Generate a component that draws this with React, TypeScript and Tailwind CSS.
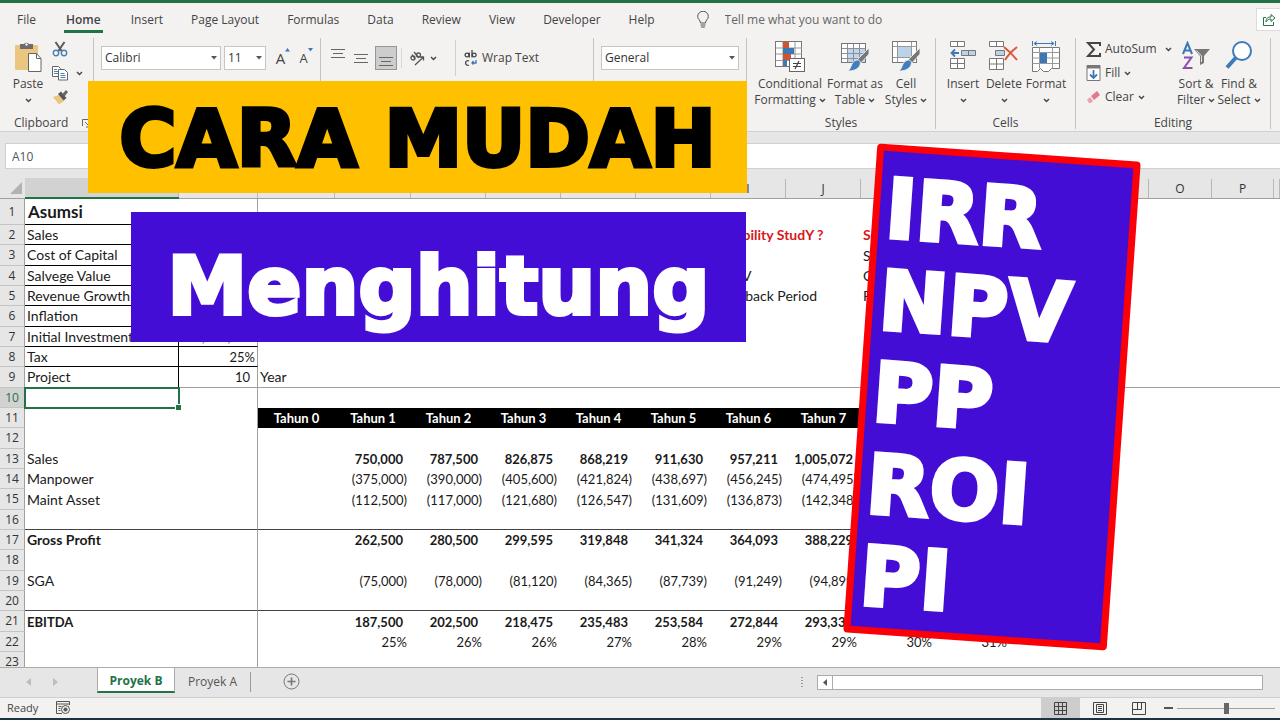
import type { ReactNode } from "react";

type Cell = {
  text: string;
  className?: string;
};

type SheetRow = {
  id: number;
  cells: Record<string, Cell>;
};

const menuTabs = ["File", "Home", "Insert", "Page Layout", "Formulas", "Data", "Review", "View", "Developer", "Help"];

const columns = [
  { name: "A", width: "w-[154px]" },
  { name: "B", width: "w-[79px]" },
  { name: "C", width: "w-[77px]" },
  { name: "D", width: "w-[76px]" },
  { name: "E", width: "w-[75px]" },
  { name: "F", width: "w-[75px]" },
  { name: "G", width: "w-[75px]" },
  { name: "H", width: "w-[75px]" },
  { name: "I", width: "w-[75px]" },
  { name: "J", width: "w-[75px]" },
  { name: "K", width: "w-[75px]" },
  { name: "L", width: "w-[75px]" },
  { name: "M", width: "w-[75px]" },
  { name: "N", width: "w-[63px]" },
  { name: "O", width: "w-[63px]" },
  { name: "P", width: "w-[62px]" },
  { name: "", width: "" },
];

const bold = "text-right font-bold pr-2";
const plain = "text-right pr-1";
const heading = "text-center font-bold text-white";

// Spreads a list of values over the columns from "first" onwards
const series = (first: string, values: string[], className: string) => {
  const start = columns.findIndex((column) => column.name === first);
  const cells: Record<string, Cell> = {};
  values.forEach((text, i) => {
    cells[columns[start + i].name] = { text, className };
  });
  return cells;
};

const label = (text: string, className = "pl-[2px] text-[14px]") => ({ A: { text, className } });

const rows: SheetRow[] = [
  { id: 1, cells: label("Asumsi", "pl-[3px] text-[17px] font-bold") },
  {
    id: 2,
    cells: {
      ...label("Sales"),
      I: { text: "Feasibility StudY ?", className: "text-[14px] font-bold text-[#d8171b]" },
      K: { text: "S", className: "pl-[2px] text-[14px] font-bold text-[#d8171b]" },
    },
  },
  { id: 3, cells: { ...label("Cost of Capital"), K: { text: "S", className: "pl-[2px] text-[14px]" } } },
  {
    id: 4,
    cells: {
      ...label("Salvege Value"),
      I: { text: "NPV", className: "pl-3 text-[14px]" },
      K: { text: "C", className: "pl-[2px] text-[14px]" },
    },
  },
  {
    id: 5,
    cells: {
      ...label("Revenue Growth"),
      I: { text: "Payback Period", className: "pl-3 text-[14px]" },
      K: { text: "R", className: "pl-[2px] text-[14px]" },
    },
  },
  { id: 6, cells: label("Inflation") },
  { id: 7, cells: { ...label("Initial Investment"), B: { text: "1,000,000", className: plain } } },
  { id: 8, cells: { ...label("Tax"), B: { text: "25%", className: "text-right pr-[2px]" } } },
  {
    id: 9,
    cells: {
      ...label("Project"),
      B: { text: "10", className: "text-right pr-[7px]" },
      C: { text: "Year", className: "pl-[2px] text-[14px]" },
    },
  },
  { id: 10, cells: {} },
  {
    id: 11,
    cells: series("C", ["Tahun 0", "Tahun 1", "Tahun 2", "Tahun 3", "Tahun 4", "Tahun 5", "Tahun 6", "Tahun 7"], heading),
  },
  { id: 12, cells: {} },
  {
    id: 13,
    cells: {
      ...label("Sales"),
      ...series("D", ["750,000", "787,500", "826,875", "868,219", "911,630", "957,211", "1,005,072"], bold),
    },
  },
  {
    id: 14,
    cells: {
      ...label("Manpower"),
      ...series("D", ["(375,000)", "(390,000)", "(405,600)", "(421,824)", "(438,697)", "(456,245)", "(474,495)"], plain),
    },
  },
  {
    id: 15,
    cells: {
      ...label("Maint Asset"),
      ...series("D", ["(112,500)", "(117,000)", "(121,680)", "(126,547)", "(131,609)", "(136,873)", "(142,348)"], plain),
    },
  },
  { id: 16, cells: {} },
  {
    id: 17,
    cells: {
      ...label("Gross Profit", "pl-[2px] text-[14px] font-bold"),
      ...series("D", ["262,500", "280,500", "299,595", "319,848", "341,324", "364,093", "388,229"], bold),
    },
  },
  { id: 18, cells: {} },
  {
    id: 19,
    cells: {
      ...label("SGA"),
      ...series("D", ["(75,000)", "(78,000)", "(81,120)", "(84,365)", "(87,739)", "(91,249)", "(94,899)"], plain),
    },
  },
  { id: 20, cells: {} },
  {
    id: 21,
    cells: {
      ...label("EBITDA", "pl-[2px] text-[13px] font-bold"),
      ...series("D", ["187,500", "202,500", "218,475", "235,483", "253,584", "272,844", "293,330"], bold),
    },
  },
  { id: 22, cells: series("D", ["25%", "26%", "26%", "27%", "28%", "29%", "29%", "30%", "31%"], plain) },
  { id: 23, cells: {} },
];

function Chevron() {
  return (
    <svg width="7" height="5" viewBox="0 0 7 5" className="shrink-0" fill="none" stroke="#444" strokeWidth="1.4">
      <path d="M1 1l2.5 2.5L6 1" />
    </svg>
  );
}

function Group({ name, className, children }: { name: string; className: string; children: ReactNode }) {
  return (
    <div className={`flex shrink-0 flex-col border-r border-[#c4c4c4] ${className}`} role="group" aria-label={name}>
      {children}
    </div>
  );
}

function GroupLabel({ children }: { children: ReactNode }) {
  return <div className="h-3 text-center leading-3">{children}</div>;
}

function BigButton({ icon, first, second, className }: { icon: ReactNode; first: string; second?: string; className: string }) {
  return (
    <button type="button" className={`flex shrink-0 flex-col items-center pt-[3px] leading-4 ${className}`}>
      <span className="flex h-[35px] items-start justify-center">{icon}</span>
      <span className="whitespace-nowrap">{first}</span>
      <span className="flex h-4 items-center gap-[3px] whitespace-nowrap">
        {second}
        <Chevron />
      </span>
    </button>
  );
}

function PasteIcon() {
  return (
    <svg width="28" height="32" viewBox="0 0 28 32">
      <rect x="1" y="4" width="23" height="25" rx="1" fill="#eac681" />
      <path d="M6 3h4a3 3 0 0 1 5 0h4v5H6z" fill="#6d6d6d" />
      <circle cx="12.500" cy="3.500" r="1.200" fill="#f3f2f1" />
      <path d="M14.500 12.500h8l4.500 5v13H14.500z" fill="#fff" stroke="#666" />
      <path d="M22.500 12.500v5H27" fill="none" stroke="#666" />
    </svg>
  );
}

function CutIcon() {
  return (
    <svg width="16" height="16" viewBox="0 0 16 16" fill="none">
      <path d="M3.500 1l6.500 9.500M12.500 1L6 10.500" stroke="#5a5a5a" strokeWidth="2" />
      <circle cx="4" cy="12" r="2.700" stroke="#4a80b8" strokeWidth="1.400" />
      <circle cx="12" cy="12" r="2.700" stroke="#4a80b8" strokeWidth="1.400" />
    </svg>
  );
}

function CopyIcon() {
  return (
    <svg width="16" height="16" viewBox="0 0 16 16" fill="#fff" stroke="#666">
      <path d="M.5 1.500h6l2 2v8h-8z" />
      <path d="M2 4.500h3M2 6.500h4M2 8.500h4" stroke="#4a80b8" />
      <path d="M6.500 4.500h6l3 3v7.500h-9z" />
      <path d="M8.500 8.500h4M8.500 10.500h5M8.500 12.500h5" stroke="#4a80b8" />
    </svg>
  );
}

function PainterIcon() {
  return (
    <svg width="17" height="16" viewBox="0 0 17 16">
      <path d="M1 8l6-2 5 6-5 3.500z" fill="#eac681" />
      <path d="M6 5l3-2.500 5.500 6.500-3 2.500z" fill="#555" />
      <path d="M10 5.500l4-4.500 2 2-3.500 4.500z" fill="#666" />
    </svg>
  );
}

function ConditionalIcon() {
  return (
    <svg width="30" height="31" viewBox="0 0 30 31">
      <rect x=".5" y=".5" width="26" height="25" fill="#fff" stroke="#777" />
      <path d="M1 7h26M1 13h26M1 19.500h26M8 1v24M20 1v24" stroke="#999" fill="none" />
      <rect x="8" y="1" width="6" height="6" fill="#d35230" />
      <rect x="8" y="7" width="11" height="6" fill="#3c78b4" />
      <rect x="8" y="13" width="8" height="6" fill="#d35230" />
      <rect x="8" y="19" width="4" height="6" fill="#3c78b4" />
      <rect x="14.500" y="17.500" width="15" height="13" fill="#fff" stroke="#666" />
      <path d="M18 22.500h8M18 25.500h8M24 20l-4 8" stroke="#444" strokeWidth="1.200" />
    </svg>
  );
}

function Brush() {
  return (
    <>
      <path d="M28 7v6l-8 9-4-3z" fill="#777" stroke="#f3f2f1" strokeWidth=".8" />
      <path d="M16 19c3 0 4 2 3 5-2 5-8 6-12 6 4-3 3-10 9-11z" fill="#3f7fbe" stroke="#f3f2f1" strokeWidth=".8" />
    </>
  );
}

function FormatTableIcon() {
  return (
    <svg width="29" height="31" viewBox="0 0 29 31">
      <rect x=".5" y="2.500" width="24" height="19" fill="#fff" stroke="#777" />
      <rect x="6" y="8" width="18" height="13" fill="#c2d5ea" />
      <path d="M1 7.500h24M1 12.500h24M1 17.500h24M6.500 3v18M12.500 3v18M18.500 3v18" stroke="#8a9097" fill="none" />
      <Brush />
    </svg>
  );
}

function CellStylesIcon() {
  return (
    <svg width="29" height="31" viewBox="0 0 29 31">
      <rect x=".5" y=".5" width="24" height="21" fill="#fff" stroke="#777" />
      <path d="M1 5.500h24M1 16.500h24M5.500 1v20M19.500 1v20" stroke="#999" fill="none" />
      <rect x="6" y="6" width="13" height="10" fill="#bcd2ea" />
      <Brush />
    </svg>
  );
}

function InsertIcon() {
  return (
    <svg width="28" height="30" viewBox="0 0 28 30" fill="#fff" stroke="#777">
      <path d="M1.500.5h14v5h-14zM8.500.5v5M1.500 17.500h14v10h-14zM1.500 22.500h14M8.500 17.500v10" />
      <path d="M12.500 9.500h14v5h-14zM19.500 9.500v5" fill="#bcd2ea" />
      <path d="M10 12H3M6 8.500L2.500 12 6 15.500" fill="none" stroke="#3c78b4" strokeWidth="1.800" />
    </svg>
  );
}

function DeleteIcon() {
  return (
    <svg width="30" height="30" viewBox="0 0 30 30" fill="#fff" stroke="#777">
      <path d="M.5.5h14v5H.5zM7.500.5v5M.5 17.500h14v11H.5zM.5 23h14M7.500 17.500v11" />
      <path d="M6.500 9.500h9v5h-9z" fill="#bcd2ea" />
      <path d="M15 6c5 4 9 8 13 13M28 6c-5 4-9 8-12 13" fill="none" stroke="#d9583a" strokeWidth="2" />
    </svg>
  );
}

function FormatIcon() {
  return (
    <svg width="28" height="32" viewBox="0 0 28 32" fill="#fff" stroke="#777">
      <path d="M.5 6.500h27v21h-8l-3 3h-5l-3-3-3 3h-5z" />
      <path d="M.5 11.500h27M.5 22.500h27M7.500 6.500v21M20.500 6.500v21M.5 17h27" fill="none" stroke="#999" />
      <rect x="8" y="12" width="7" height="10" fill="#3c78b4" stroke="none" />
      <path d="M2 2.500h20M5 .5l-3 2 3 2M19 .5l3 2-3 2M.5 0v5M23.500 0v5" fill="none" stroke="#3c78b4" />
    </svg>
  );
}

function SortIcon() {
  return (
    <svg width="29" height="30" viewBox="0 0 29 30" fill="none">
      <path d="M1 13L5.500 2l4.500 11M2.500 9.500h6" stroke="#3c78b4" strokeWidth="2" />
      <path d="M2 16.500h7.500L2 27h8.500" stroke="#8a4fae" strokeWidth="2" />
      <path d="M12 8h16l-6 7v7l-4 2v-9z" fill="#777" />
      <path d="M14.500 9.500l5 5.500v6" stroke="#f3f2f1" strokeWidth=".9" />
    </svg>
  );
}

function FindIcon() {
  return (
    <svg width="28" height="30" viewBox="0 0 28 30" fill="none" stroke="#3f7abb">
      <circle cx="17" cy="10" r="9" fill="#fff" strokeWidth="2" />
      <path d="M11 16.500L2 26.500" strokeWidth="4" />
    </svg>
  );
}

function Caret() {
  return (
    <svg width="6" height="4" viewBox="0 0 6 4" className="pointer-events-none absolute right-1 top-[10px]">
      <path d="M0 0h6L3 3.500z" fill="#555" />
    </svg>
  );
}

function DropDown({ name, value, className }: { name: string; value: string; className: string }) {
  return (
    <div className={`relative h-6 shrink-0 ${className}`}>
      <select
        aria-label={name}
        defaultValue={value}
        className="h-6 w-full appearance-none border border-[#c6c6c6] bg-white pl-[3px] leading-4 text-[#333]"
      >
        <option>{value}</option>
      </select>
      <Caret />
    </div>
  );
}

function AlignIcon() {
  return (
    <svg width="14" height="9" viewBox="0 0 14 9" stroke="#666">
      <path d="M0 .5h14M2 4.500h10M0 8.500h14" />
    </svg>
  );
}

function Ribbon() {
  return (
    <div className="flex h-24 shrink-0 items-stretch border-b border-[#d0d0d0] pb-[2px] pt-[2px]">
      <Group name="Clipboard" className="w-[94px]">
        <div className="flex h-[79px]">
          <BigButton icon={<PasteIcon />} first="Paste" className="w-[56px]" />
          <div className="-ml-1 flex flex-col gap-2 pt-[3px]">
            <button type="button" aria-label="Cut">
              <CutIcon />
            </button>
            <button type="button" aria-label="Copy" className="flex items-center gap-2">
              <CopyIcon />
              <Chevron />
            </button>
            <button type="button" aria-label="Format Painter">
              <PainterIcon />
            </button>
          </div>
        </div>
        <div className="flex h-3 items-center pl-[14px] leading-3">
          Clipboard
          <svg width="9" height="9" viewBox="0 0 9 9" className="ml-[14px] shrink-0" fill="none" stroke="#666">
            <path d="M.5 7V.5H7M3 3l5 5M8 4v4H4" />
          </svg>
        </div>
      </Group>
      <Group name="Font" className="w-[227px]">
        <div className="flex items-center gap-[3px] pl-[7px] pt-2">
          <DropDown name="Font" value="Calibri" className="w-[120px]" />
          <DropDown name="Font size" value="11" className="w-[42px]" />
          <button type="button" aria-label="Increase font size" className="ml-1 flex w-5 items-start justify-center text-[15px] leading-5">
            A
            <svg width="5" height="4" viewBox="0 0 5 4">
              <path d="M0 3.500h5L2.500 0z" fill="#3c78b4" />
            </svg>
          </button>
          <button type="button" aria-label="Decrease font size" className="flex w-5 items-start justify-center text-[13px] leading-5">
            A
            <svg width="5" height="4" viewBox="0 0 5 4">
              <path d="M0 0h5L2.500 3.500z" fill="#3c78b4" />
            </svg>
          </button>
        </div>
      </Group>
      <Group name="Alignment" className="w-[273px]">
        <div className="mt-[2px] flex h-9 items-center pl-[10px]">
          <button type="button" aria-label="Top align" className="flex h-6 w-[23px] items-start pt-[3px]">
            <AlignIcon />
          </button>
          <button type="button" aria-label="Middle align" className="flex h-6 w-[21px] items-center">
            <AlignIcon />
          </button>
          <button
            type="button"
            aria-label="Bottom align"
            aria-pressed="true"
            className="flex h-6 w-[22px] items-end justify-center border border-[#969696] bg-[#cdcdcd] pb-[3px]"
          >
            <AlignIcon />
          </button>
          <button type="button" aria-label="Orientation" className="ml-1 flex h-5 items-center gap-1 border-l border-[#d8d8d8] pl-[7px]">
            <svg width="17" height="17" viewBox="0 0 17 17" fill="none" stroke="#555" strokeWidth="1.300">
              <circle cx="4" cy="8" r="2" />
              <path d="M3 4.500l3 4.500M5 2l5 6" />
              <circle cx="9.500" cy="5" r="2" />
              <path d="M6 15l8-7.500M11 7h3.500v3.500" />
            </svg>
            <Chevron />
          </button>
          <div className="ml-[18px] flex h-9 items-center border-l border-[#d0d0d0] pl-2">
            <button type="button" className="flex items-center gap-1">
              <svg width="14" height="16" viewBox="0 0 14 16" fill="none" stroke="#444" strokeWidth="1.300">
                <circle cx="3" cy="5" r="1.900" />
                <path d="M5.300 2.500v5M8 0v7.500M5 15a2.300 2.300 0 1 1 0-4" />
                <circle cx="10.200" cy="5" r="1.900" />
                <path d="M12 10v3H8M9.500 11L8 13l1.500 1.500" stroke="#3c78b4" />
              </svg>
              Wrap Text
            </button>
          </div>
        </div>
      </Group>
      <Group name="Number" className="w-[153px]">
        <div className="pl-[7px] pt-2">
          <DropDown name="Number format" value="General" className="w-[138px]" />
        </div>
      </Group>
      <Group name="Styles" className="w-[189px]">
        <div className="flex h-[79px] pl-2">
          <BigButton icon={<ConditionalIcon />} first="Conditional" second="Formatting" className="w-[70px]" />
          <BigButton icon={<FormatTableIcon />} first="Format as" second="Table" className="w-[60px]" />
          <BigButton icon={<CellStylesIcon />} first="Cell" second="Styles" className="w-[42px]" />
        </div>
        <GroupLabel>Styles</GroupLabel>
      </Group>
      <Group name="Cells" className="w-[140px]">
        <div className="flex h-[79px] pl-[7px]">
          <BigButton icon={<InsertIcon />} first="Insert" className="w-[40px]" />
          <BigButton icon={<DeleteIcon />} first="Delete" className="w-[42px]" />
          <BigButton icon={<FormatIcon />} first="Format" className="w-[42px]" />
        </div>
        <GroupLabel>Cells</GroupLabel>
      </Group>
      <Group name="Editing" className="w-[195px]">
        <div className="flex h-[79px] pl-[10px]">
          <div className="flex w-[90px] flex-col gap-2 pt-[3px]">
            <button type="button" className="flex h-4 items-center gap-1">
              <svg width="15" height="15" viewBox="0 0 15 15" fill="none" stroke="#444" strokeWidth="2">
                <path d="M14 4V1H2l6 6.500L2 14h12v-3" />
              </svg>
              AutoSum
              <span className="ml-1">
                <Chevron />
              </span>
            </button>
            <button type="button" className="flex h-4 items-center gap-1">
              <svg width="15" height="16" viewBox="0 0 15 16" fill="#fff" stroke="#777">
                <path d="M1 .5h13v15H1z" />
                <path d="M1 2h13" strokeWidth="3" />
                <path d="M7.500 5v8M4 9.500l3.500 3.500L11 9.500" fill="none" stroke="#3c78b4" strokeWidth="1.800" />
              </svg>
              Fill
              <Chevron />
            </button>
            <button type="button" className="flex h-4 items-center gap-1">
              <svg width="15" height="15" viewBox="0 0 15 15">
                <path d="M5 6l6-5 3 4-6 5z" fill="#e2788c" />
                <path d="M4 7l3 4-2 2H3L1 10z" fill="#eaa3b0" />
              </svg>
              Clear
              <Chevron />
            </button>
          </div>
          <BigButton icon={<SortIcon />} first="Sort &" second="Filter" className="w-[40px]" />
          <BigButton icon={<FindIcon />} first="Find &" second="Select" className="w-[46px]" />
        </div>
        <GroupLabel>Editing</GroupLabel>
      </Group>
    </div>
  );
}

const rowHeight = (id: number) => {
  if (id === 1) return "h-[26px]";
  return id % 3 === 0 ? "h-[21px]" : "h-5";
};

// Borders that belong to one cell: input table, frozen panes and subtotal lines
const cellBorder = (id: number, column: string) => {
  const classes: string[] = [];
  if (column === "B") classes.push("border-r border-r-[#a0a0a0]");
  if (column === "A" && id > 1 && id < 10) classes.push("border-r border-r-black");
  if (id === 9) classes.push("border-b border-b-[#a0a0a0]");
  else if (id < 9 && (column === "A" || column === "B")) classes.push("border-b border-b-black");
  if ((id === 16 || id === 20) && column !== "" && column <= "L") classes.push("border-b border-b-[#444444]");
  if (id === 11 && column >= "C" && column <= "L") classes.push("bg-black");
  return classes.join(" ");
};

function Sheet() {
  return (
    <div className="min-h-0 flex-1 overflow-hidden bg-white font-[Lato,sans-serif] text-[13px] leading-4 text-[#1a1a1a]">
      <table className="w-full table-fixed border-separate border-spacing-0">
        <thead>
          <tr className="h-[30px] bg-[#e6e6e6] font-['Open_Sans',sans-serif] text-[12px] text-[#333]">
            <th className="w-[25px] border-b border-[#a0a0a0] p-0 align-bottom">
              <svg width="12" height="12" viewBox="0 0 12 12" className="mb-1 ml-[10px]">
                <path d="M12 0v12H0z" fill="#b2b2b2" />
              </svg>
            </th>
            {columns.map((column) => (
              <th
                key={column.name}
                className={`p-0 align-bottom font-normal ${column.width} ${
                  column.name === "A" ? "border-b-2 border-[#217346]" : "border-b border-[#a0a0a0]"
                }`}
              >
                <div
                  className={`h-[19px] border-r border-[#b8b8b8] leading-[19px] ${column.name === "A" ? "bg-[#d2d2d2] text-[#217346]" : ""}`}
                >
                  {column.name}
                </div>
              </th>
            ))}
          </tr>
        </thead>
        <tbody>
          {rows.map((row) => (
            <tr key={row.id} className={rowHeight(row.id)}>
              <th
                className={`border-b border-r p-0 font-['Open_Sans',sans-serif] text-[12px] font-normal ${
                  row.id === 10
                    ? "border-b-[#c4c4c4] border-r-[#217346] bg-[#d2d2d2] text-[#217346]"
                    : "border-b-[#c4c4c4] border-r-[#a0a0a0] bg-[#e6e6e6] text-[#333]"
                }`}
              >
                {row.id}
              </th>
              {columns.map((column) => {
                const cell = row.cells[column.name];
                const selected = row.id === 10 && column.name === "A";
                return (
                  <td
                    key={column.name}
                    className={`whitespace-nowrap p-0 ${selected ? "relative" : ""} ${cellBorder(row.id, column.name)} ${cell?.className ?? ""}`}
                  >
                    {cell?.text}
                    {selected && (
                      <div className="absolute -inset-px border-2 border-[#217346]">
                        <span className="absolute -bottom-[3px] -right-[3px] size-[5px] bg-[#217346] outline outline-white" />
                      </div>
                    )}
                  </td>
                );
              })}
            </tr>
          ))}
        </tbody>
      </table>
    </div>
  );
}

function SheetTabs() {
  return (
    <div className="flex h-[30px] shrink-0 items-start border-t border-[#ababab] bg-[#e6e6e6]">
      <div className="flex h-[27px] w-[97px] items-center gap-[22px] pl-[26px]">
        <svg width="5" height="8" viewBox="0 0 5 8">
          <path d="M5 0v8L0 4z" fill="#bdbdbd" />
        </svg>
        <svg width="5" height="8" viewBox="0 0 5 8">
          <path d="M0 0v8l5-4z" fill="#bdbdbd" />
        </svg>
      </div>
      <button
        type="button"
        className="h-[25px] w-[78px] border-x border-b-2 border-x-[#ababab] border-b-[#217346] bg-white pt-[2px] font-bold text-[#217346]"
      >
        Proyek B
      </button>
      <button type="button" className="my-1 h-5 w-[76px] border-r border-[#9a9a9a] text-[#555]">
        Proyek A
      </button>
      <button type="button" aria-label="New sheet" className="ml-8 mt-[5px]">
        <svg width="17" height="17" viewBox="0 0 17 17" fill="none" stroke="#777">
          <circle cx="8.500" cy="8.500" r="7.500" />
          <path d="M8.500 4.500v8M4.500 8.500h8" strokeWidth="1.600" />
        </svg>
      </button>
      <div className="ml-auto flex items-center gap-[14px] pr-[17px] pt-[7px]">
        <svg width="2" height="11" viewBox="0 0 2 11" fill="#999">
          <path d="M0 0h2v1H0zM0 3h2v1H0zM0 6h2v1H0zM0 9h2v1H0z" />
        </svg>
        <div className="flex h-[15px] w-[446px] border border-[#ababab] bg-white">
          <button type="button" aria-label="Scroll left" className="flex w-[15px] items-center justify-center border-r border-[#ababab]">
            <svg width="4" height="7" viewBox="0 0 4 7">
              <path d="M4 0v7L0 3.500z" fill="#555" />
            </svg>
          </button>
        </div>
      </div>
    </div>
  );
}

function StatusBar() {
  return (
    <div className="flex h-[23px] shrink-0 items-stretch border-b-2 border-t border-b-[#1d3440] border-t-[#cfcfcf] bg-[#f3f2f1] text-[11px] text-[#444]">
      <div className="flex items-center gap-[18px] pl-[7px]">
        Ready
        <svg width="15" height="14" viewBox="0 0 15 14" fill="none" stroke="#555">
          <path d="M6 12.500H.5V.5h13V4M.5 3h13M2.500 5.500h3M2.500 7.500h2M2.500 9.500h2" />
          <circle cx="9.500" cy="8.500" r="4" />
          <circle cx="9.500" cy="8.500" r="1.600" fill="#555" />
        </svg>
      </div>
      <div className="ml-auto flex items-stretch">
        <button type="button" aria-label="Normal view" className="flex w-[39px] items-center justify-center bg-[#cdcdcd]">
          <svg width="13" height="13" viewBox="0 0 13 13" fill="none" stroke="#444">
            <path d="M.5.5h12v12H.5zM.5 4.500h12M.5 8.500h12M4.500.5v12M8.500.5v12" />
          </svg>
        </button>
        <button type="button" aria-label="Page layout view" className="flex w-[39px] items-center justify-center">
          <svg width="14" height="13" viewBox="0 0 14 13" fill="none" stroke="#444">
            <path d="M.5.5h13v12H.5zM3.500 2.500h7v8h-7zM5 4.500h4M5 6.500h4M5 8.500h4" />
          </svg>
        </button>
        <button type="button" aria-label="Page break preview" className="flex w-[39px] items-center justify-center">
          <svg width="14" height="13" viewBox="0 0 14 13" fill="none" stroke="#444">
            <path d="M.5.5h13v12H.5zM.5 7.500h9V.5M5.500.5v7" />
          </svg>
        </button>
        <div className="flex items-center gap-1 pl-[6px] pr-[5px]">
          <svg width="9" height="2" viewBox="0 0 9 2">
            <path d="M0 0h9v2H0z" fill="#555" />
          </svg>
          <input
            type="range"
            aria-label="Zoom"
            defaultValue={50}
            className="h-3 w-[98px] appearance-none bg-transparent [&::-webkit-slider-runnable-track]:h-px [&::-webkit-slider-runnable-track]:bg-[#a0a0a0] [&::-webkit-slider-thumb]:-mt-[5px] [&::-webkit-slider-thumb]:h-[11px] [&::-webkit-slider-thumb]:w-[5px] [&::-webkit-slider-thumb]:appearance-none [&::-webkit-slider-thumb]:bg-[#666]"
          />
        </div>
      </div>
    </div>
  );
}

export default function App() {
  return (
    <div className="relative flex h-screen flex-col overflow-hidden bg-[#f3f2f1] font-['Open_Sans',sans-serif] text-[12px] text-[#444]">
      <div className="h-[3px] shrink-0 bg-[#217346]" />

      {/* Menu tabs */}
      <div className="flex h-[33px] shrink-0 items-center pl-[17px]">
        <nav className="flex h-full items-center gap-7">
          {menuTabs.map((tab) => (
            <button
              key={tab}
              type="button"
              className={
                tab === "Home"
                  ? "h-[26px] whitespace-nowrap border-b-[3px] border-[#217346] px-[2px] pt-[3px] font-semibold"
                  : "whitespace-nowrap"
              }
            >
              {tab}
            </button>
          ))}
        </nav>
        <label className="ml-[42px] flex items-center gap-4">
          <svg width="12" height="17" viewBox="0 0 12 17" fill="none" stroke="#555">
            <path d="M3.500 12C3.500 9 .7 8.500.7 5.500a5.300 5.300 0 0 1 10.600 0C11.300 8.500 8.500 9 8.500 12zM3.500 14h5M4 16h4" />
          </svg>
          <input
            type="text"
            aria-label="Tell me what you want to do"
            placeholder="Tell me what you want to do"
            className="w-[200px] bg-transparent placeholder:text-[#666]"
          />
        </label>
        <button type="button" aria-label="Share" className="ml-auto h-[23px] w-[24px] border border-r-0 border-[#dcdcdc] bg-white pl-[6px]">
          <svg width="13" height="13" viewBox="0 0 13 13" fill="none" stroke="#217346">
            <path d="M3 4.500H.5v8h10V9" />
            <path d="M3 9c0-4 2-5 5-5V1.500L12 5 8 8.500V6C6 6 4.500 6.500 3 9z" />
          </svg>
        </button>
      </div>

      <Ribbon />

      {/* Name box and formula bar */}
      <div className="flex h-[37px] shrink-0 items-end gap-2 bg-[#e6e6e6] pl-[5px] pt-[11px]">
        <input
          type="text"
          aria-label="Name box"
          defaultValue="A10"
          className="h-[26px] w-[120px] border border-[#d0d0d0] bg-white pl-[6px] text-[#555]"
        />
        <input type="text" aria-label="Formula bar" className="h-[26px] min-w-0 flex-1 border-y border-[#d0d0d0] bg-white px-2" />
      </div>

      <Sheet />
      <SheetTabs />
      <StatusBar />

      {/* Title banners laid over the workbook */}
      <div className="absolute left-[88px] top-[81px] flex h-[112px] w-[659px] items-center justify-center whitespace-nowrap bg-[#ffc000] pt-1 font-['DejaVu_Sans',sans-serif] text-[78px] font-bold leading-none text-black [-webkit-text-stroke:4px_black]">
        CARA MUDAH
      </div>
      <div className="absolute left-[131px] top-[212px] flex h-[130px] w-[615px] items-center justify-center whitespace-nowrap bg-[#430dd6] pt-5 font-['DejaVu_Sans',sans-serif] text-[80px] font-bold leading-none text-white [-webkit-text-stroke:4px_white]">
        Menghitung
      </div>
      <div className="absolute left-[860px] top-[152px] h-[490px] w-[264px] rotate-[4deg] rounded-[4px] border-[7px] border-[#fb0007] bg-[#430dd6] pl-[6px] pt-3 font-['DejaVu_Sans',sans-serif] text-[82px] font-bold leading-[92px] text-white [-webkit-text-stroke:4px_white]">
        <div>IRR</div>
        <div>NPV</div>
        <div>PP</div>
        <div>ROI</div>
        <div>PI</div>
      </div>
    </div>
  );
}
